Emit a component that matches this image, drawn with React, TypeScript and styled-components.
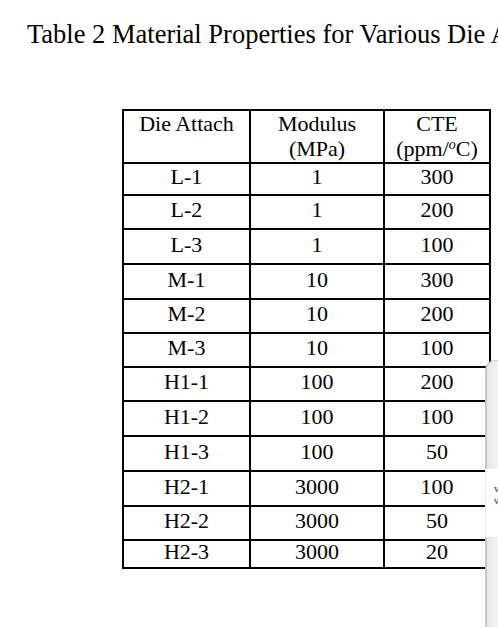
import * as React from 'react';
import styled, { createGlobalStyle } from 'styled-components';

const GlobalStyle = createGlobalStyle`
   html, body {
      margin: 0;
      padding: 0;
      background: #ffffff;
   }
   body {
      font-family: 'Liberation Serif', 'Times New Roman', serif;
      color: #000000;
   }
`;

const Page = styled.div`
   position: relative;
   width: 498px;
   height: 627px;
   overflow: hidden;
   padding: 19px 0 0 27px;
   box-sizing: border-box;
`;

const Title = styled.h1`
   margin: 0;
   font-weight: normal;
   font-size: 26.5px;
   line-height: 30px;
   white-space: nowrap;
`;

const Grid = styled.div`
   display: grid;
   grid-template-columns: 127px 134px 106px;
   width: 367px;
   margin: 60px 0 0 95px;
   border-left: 2px solid #000;
   border-top: 2px solid #000;
`;

const Cell = styled.div<{ $h: number; $head?: boolean }>`
   height: ${(p) => p.$h}px;
   box-sizing: border-box;
   border-right: 2px solid #000;
   border-bottom: 2px solid #000;
   display: flex;
   flex-direction: column;
   align-items: center;
   justify-content: ${(p) => (p.$head ? 'flex-start' : 'center')};
   font-size: 22px;
   line-height: 25px;
   text-align: center;
   padding-top: ${(p) => (p.$head ? 0 : 0)}px;
   padding-bottom: ${(p) => (p.$head ? 0 : 5)}px;
   white-space: nowrap;
`;

const Sup = styled.sup`
   font-style: italic;
   font-size: 14px;
   vertical-align: 0;
   position: relative;
   top: -7px;
`;

const Side = styled.div`
   position: absolute;
   left: 485px;
   right: -20px;
   top: 360px;
   bottom: 0;
   display: flex;
   flex-direction: column;
`;

const Panel = styled.div<{ $h?: number; $round?: boolean }>`
   height: ${(p) => (p.$h ? `${p.$h}px` : 'auto')};
   flex: ${(p) => (p.$h ? 'none' : 1)};
   border-left: 2px solid #c6c6c6;
   border-top-left-radius: ${(p) => (p.$round ? 10 : 0)}px;
   border-top: ${(p) => (p.$round ? '1px solid #d4d4d4' : 'none')};
   background: linear-gradient(to right, #e6e6e6, #f4f4f4 40%, #f3f3f3);
`;

const Gap = styled.div`
   height: 54px;
   border-left: 1px solid #ececec;
   background: #ffffff;
   padding: 14px 0 0 8px;
   font-size: 10px;
   line-height: 12px;
   color: #2a2420;
`;

const rows: [string, string, string, number][] = [
   ['L-1', '1', '300', 32],
   ['L-2', '1', '200', 34],
   ['L-3', '1', '100', 35],
   ['M-1', '10', '300', 35],
   ['M-2', '10', '200', 34],
   ['M-3', '10', '100', 34],
   ['H1-1', '100', '200', 34],
   ['H1-2', '100', '100', 35],
   ['H1-3', '100', '50', 35],
   ['H2-1', '3000', '100', 35],
   ['H2-2', '3000', '50', 34],
   ['H2-3', '3000', '20', 28],
];

export default function App() {
   return (
      <Page>
         <GlobalStyle />
         <Title>Table 2 Material Properties for Various Die Attach</Title>
         <Grid>
            <Cell $h={53} $head>Die Attach</Cell>
            <Cell $h={53} $head>
               <span>Modulus</span>
               <span>(MPa)</span>
            </Cell>
            <Cell $h={53} $head>
               <span>CTE</span>
               <span>
                  (ppm/<Sup>o</Sup>C)
               </span>
            </Cell>
            {rows.map(([name, mod, cte, h]) => (
               <React.Fragment key={name}>
                  <Cell $h={h}>{name}</Cell>
                  <Cell $h={h}>{mod}</Cell>
                  <Cell $h={h}>{cte}</Cell>
               </React.Fragment>
            ))}
         </Grid>
         <Side>
            <Panel $h={108} $round />
            <Gap>
               v<br />v
            </Gap>
            <Panel />
         </Side>
      </Page>
   );
}
